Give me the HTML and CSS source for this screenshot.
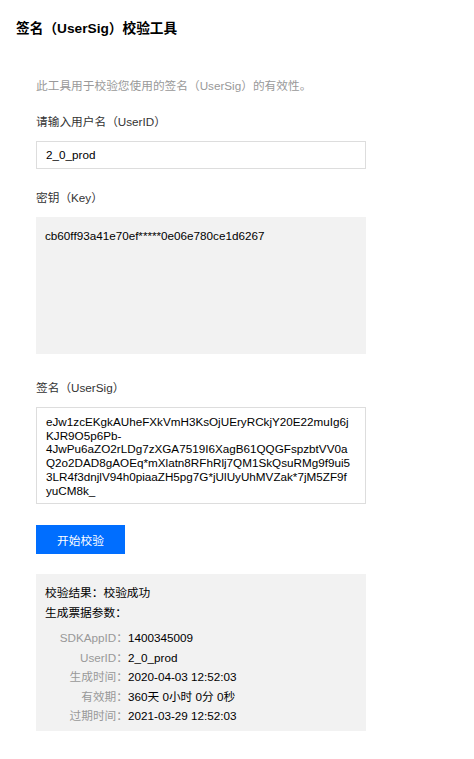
FILE: index.html
```html
<!DOCTYPE html>
<html lang="zh-CN">
<head>
<meta charset="utf-8">
<title>签名（UserSig）校验工具</title>
<link rel="stylesheet" href="styles.css">
</head>
<body>
<h1 class="title">签名（UserSig）校验工具</h1>
<div class="content">
  <p class="desc">此工具用于校验您使用的签名（UserSig）的有效性。</p>

  <div class="label label-first">请输入用户名（UserID）</div>
  <div class="input">2_0_prod</div>

  <div class="label label-key">密钥（Key）</div>
  <div class="keybox">cb60ff93a41e70ef*****0e06e780ce1d6267</div>

  <div class="label label-sig">签名（UserSig）</div>
  <div class="sigbox">
    <span class="line">eJw1zcEKgkAUheFXkVmH3KsOjUEryRCkjY20E22muIg6j</span>
    <span class="line">KJR9O5p6Pb-</span>
    <span class="line">4JwPu6aZO2rLDg7zXGA7519I6XagB61QQGFspzbtVV0a</span>
    <span class="line">Q2o2DAD8gAOEq*mXlatn8RFhRlj7QM1SkQsuRMg9f9ui5</span>
    <span class="line">3LR4f3dnjlV94h0piaaZH5pg7G*jUlUyUhMVZak*7jM5ZF9f</span>
    <span class="line">yuCM8k_</span>
  </div>

  <div class="button">开始校验</div>

  <div class="result">
    <div class="result-head">校验结果：校验成功</div>
    <div class="result-head">生成票据参数：</div>
    <div class="params">
      <span class="pk">SDKAppID：</span><span class="pv">1400345009</span>
      <span class="pk">UserID：</span><span class="pv">2_0_prod</span>
      <span class="pk">生成时间：</span><span class="pv">2020-04-03 12:52:03</span>
      <span class="pk">有效期：</span><span class="pv">360天 0小时 0分 0秒</span>
      <span class="pk">过期时间：</span><span class="pv">2021-03-29 12:52:03</span>
    </div>
  </div>
</div>
</body>
</html>
```

FILE: styles.css
```css
* { box-sizing: border-box; }

html, body {
  margin: 0;
  padding: 0;
  background: #ffffff;
}

body {
  font-family: "Liberation Sans", "Noto Sans CJK SC", sans-serif;
  font-size: 11.7px;
  color: #000;
}

.title {
  margin: 0;
  padding: 19px 16px 0;
  font-size: 13.7px;
  line-height: 20px;
  font-weight: bold;
  color: #000;
}

.content {
  margin-left: 36px;
  width: 330px;
}

.desc {
  margin: 38px 0 0;
  line-height: 18px;
  color: #999;
}

.label {
  line-height: 18px;
  color: #333;
  margin-bottom: 10px;
}

.label-first { margin-top: 18px; }
.label-key { margin-top: 20px; }
.label-sig { margin-top: 25px; }

.input {
  height: 28px;
  border: 1px solid #dddddd;
  padding: 0 9px;
  line-height: 26px;
  color: #000;
}

.keybox {
  height: 137px;
  background: #f2f2f2;
  padding: 10px 9px;
  line-height: 18px;
  color: #000;
}

.sigbox {
  height: 97px;
  border: 1px solid #dddddd;
  padding: 7px 9px 0;
  line-height: 13.7px;
  color: #000;
}

.line { display: block; white-space: nowrap; }

.button {
  margin-top: 21px;
  width: 89px;
  height: 29px;
  background: #006eff;
  color: #fff;
  display: flex;
  align-items: center;
  justify-content: center;
}

.result {
  margin-top: 20px;
  height: 157px;
  background: #f2f2f2;
  padding: 9px 9px 0;
}

.result-head {
  line-height: 20px;
  color: #000;
}

.params {
  margin-top: 5px;
  display: grid;
  grid-template-columns: 83px auto;
  line-height: 19.5px;
}

.pk {
  text-align: right;
  color: #999;
}

.pv { color: #000; }
```
